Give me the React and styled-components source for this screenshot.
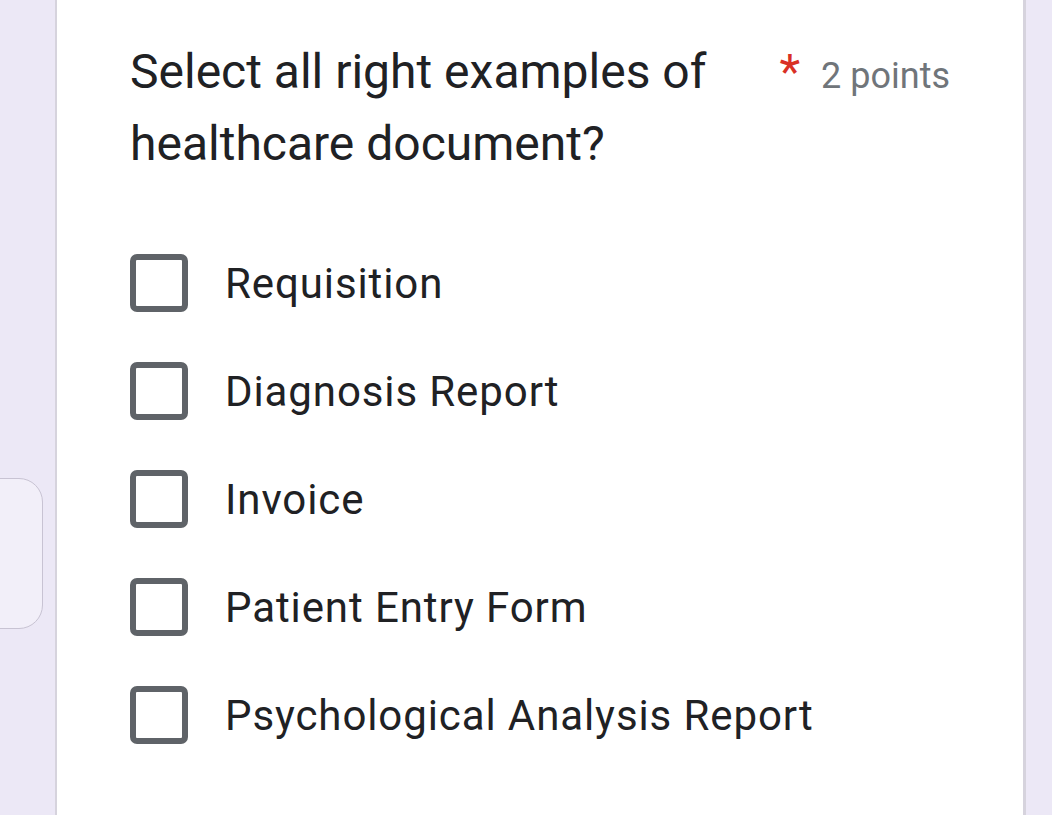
import React from 'react';
import styled, { createGlobalStyle } from 'styled-components';

const GlobalStyle = createGlobalStyle`
    html, body {
        margin: 0;
        padding: 0;
        background: #ece8f6;
        font-family: Roboto, "Liberation Sans", Arial, sans-serif;
    }
`;

const Page = styled.div`
    position: relative;
    height: 815px;
    overflow: hidden;
    background: #ece8f6;
`;

const SideTab = styled.div`
    position: absolute;
    left: -30px;
    top: 478px;
    width: 71px;
    height: 149px;
    border: 1px solid #c8c3d3;
    border-radius: 24px;
    background: #f2eff9;
`;

const Card = styled.div`
    margin-left: 55px;
    width: 971px;
    height: 815px;
    box-sizing: border-box;
    background: #ffffff;
    border-left: 2px solid #d6d3dd;
    border-right: 3px solid #d6d3dd;
    padding: 36px 73px 0 73px;
`;

const Header = styled.div`
    display: flex;
    align-items: flex-start;
    gap: 40px;
`;

const Title = styled.div`
    flex: 1;
    font-size: 48px;
    line-height: 72px;
    color: #202124;
`;

const Meta = styled.div`
    display: flex;
    align-items: baseline;
    gap: 21px;
    white-space: nowrap;
`;

const Required = styled.span`
    color: #d93025;
    font-size: 48px;
    line-height: 72px;
`;

const Points = styled.span`
    color: #70757a;
    font-size: 36px;
    position: relative;
    top: 0;
`;

const Options = styled.div`
    display: flex;
    flex-direction: column;
    margin-top: 49px;
`;

const Option = styled.label`
    display: flex;
    align-items: center;
    height: 108px;
    gap: 37px;
`;

const Box = styled.span`
    width: 58px;
    height: 58px;
    box-sizing: border-box;
    border: 6px solid #5f6368;
    border-radius: 7px;
    flex-shrink: 0;
`;

const OptionText = styled.span`
    font-size: 42px;
    letter-spacing: 0.9px;
    color: #202124;
`;

const choices = [
    'Requisition',
    'Diagnosis Report',
    'Invoice',
    'Patient Entry Form',
    'Psychological Analysis Report',
];

const App = () => {
    return (
        <Page>
            <GlobalStyle />
            <SideTab />
            <Card>
                <Header>
                    <Title>Select all right examples of healthcare document?</Title>
                    <Meta>
                        <Required>*</Required>
                        <Points>2 points</Points>
                    </Meta>
                </Header>
                <Options>
                    {choices.map(c => (
                        <Option key={c}>
                            <Box />
                            <OptionText>{c}</OptionText>
                        </Option>
                    ))}
                </Options>
            </Card>
        </Page>
    );
};

export default App;
